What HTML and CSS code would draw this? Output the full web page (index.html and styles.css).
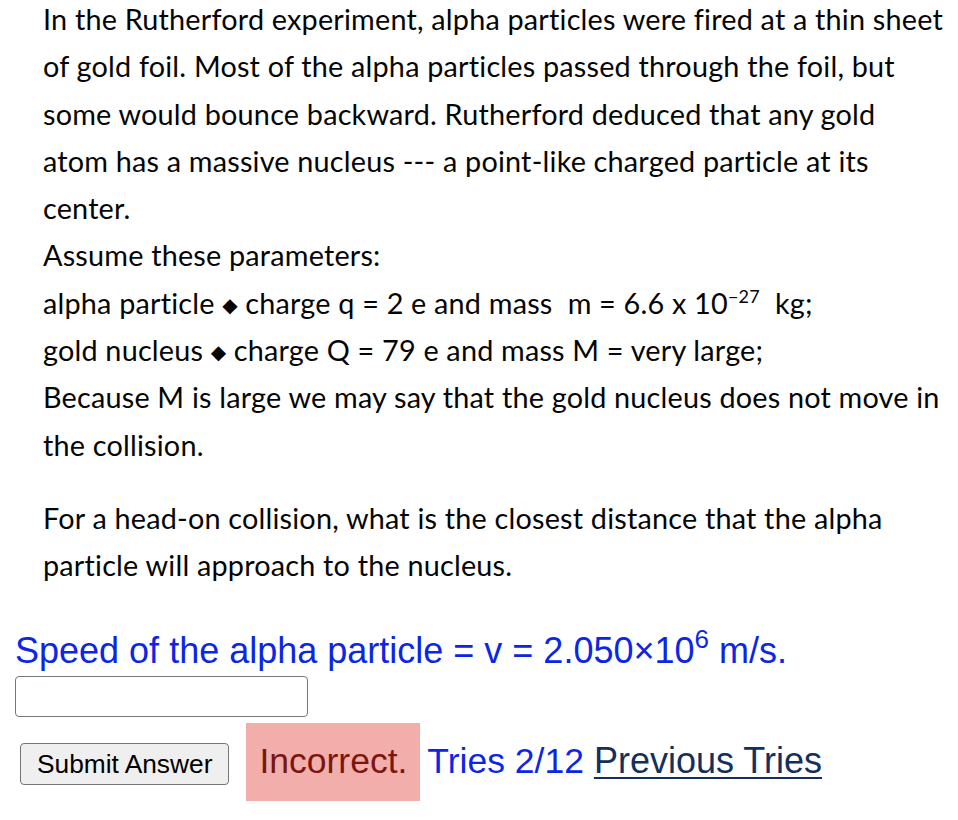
FILE: index.html
```html
<!DOCTYPE html>
<html>
<head>
<meta charset="utf-8">
<link rel="stylesheet" href="styles.css">
</head>
<body>
<div class="problem">
  <p class="desc">In the Rutherford experiment, alpha particles were fired at a thin sheet of gold foil. Most of the alpha particles passed through the foil, but some would bounce backward. Rutherford deduced that any gold atom has a massive nucleus --- a point-like charged particle at its center.<br>Assume these parameters:<br>alpha particle <span class="dia">◆</span> charge q = 2 e and mass&nbsp; m = 6.6 x 10<sup class="exp">−27</sup>&nbsp; kg;<br>gold nucleus <span class="dia">◆</span> charge Q = 79 e and mass M = very large;<br>Because M is large we may say that the gold nucleus does not move in the collision.</p>
  <p class="desc question">For a head-on collision, what is the closest distance that the alpha particle will approach to the nucleus.</p>
</div>
<div class="part">
  <p class="speed">Speed of the alpha particle = v = 2.050×10<sup class="sexp">6</sup> m/s.</p>
  <input class="answer" type="text">
  <div class="row">
    <button class="submit" type="button">Submit Answer</button>
    <span class="incorrect">Incorrect.</span>
    <span class="tries">Tries 2/12</span>
    <a class="prev" href="#">Previous Tries</a>
  </div>
</div>
</body>
</html>
```
FILE: styles.css
```css
html, body {
  margin: 0;
  padding: 0;
  background: #fff;
}
.problem {
  padding-left: 43px;
  width: 902px;
  margin-top: -4px;
}
.desc {
  margin: 0;
  font-family: Lato, "Liberation Sans", sans-serif;
  font-size: 28.8px;
  letter-spacing: 0.2px;
  line-height: 47.3px;
  color: #050505;
}
.question {
  margin-top: 26px;
}
.dia {
  font-family: "DejaVu Sans", sans-serif;
  font-size: 20px;
  line-height: 0;
  letter-spacing: 0;
  vertical-align: 2px;
}
.exp {
  font-size: 18px;
  line-height: 0;
  vertical-align: 11px;
}
.part {
  padding-left: 15px;
  font-family: "Liberation Sans", Arial, sans-serif;
}
.speed {
  margin: 40px 0 0;
  font-size: 36px;
  line-height: 41px;
  color: #0b26e6;
}
.sexp {
  font-size: 26px;
  line-height: 0;
  vertical-align: 15px;
}
.answer {
  display: block;
  box-sizing: border-box;
  width: 293px;
  height: 41px;
  margin: 5px 0 0;
  border: 1.5px solid #777;
  border-radius: 4px;
  background: #fff;
}
.row {
  display: flex;
  align-items: baseline;
  margin-top: 6px;
  font-size: 35.5px;
}
.submit {
  box-sizing: border-box;
  height: 42px;
  margin-left: 5px;
  padding: 0 16px;
  font-family: "Liberation Sans", Arial, sans-serif;
  font-size: 26.3px;
  color: #000;
  background: #efefef;
  border: 1.5px solid #767676;
  border-radius: 4px;
}
.incorrect {
  margin-left: 17px;
  padding: 18px 13px 19px;
  line-height: 41px;
  background: #f2aeab;
  color: #7a1510;
}
.tries {
  margin-left: 7px;
  color: #0b26e6;
}
.prev {
  margin-left: 10px;
  font-size: 36px;
  color: #142f5d;
  text-decoration: underline;
  text-decoration-thickness: 2px;
  text-underline-offset: 4px;
}
```
